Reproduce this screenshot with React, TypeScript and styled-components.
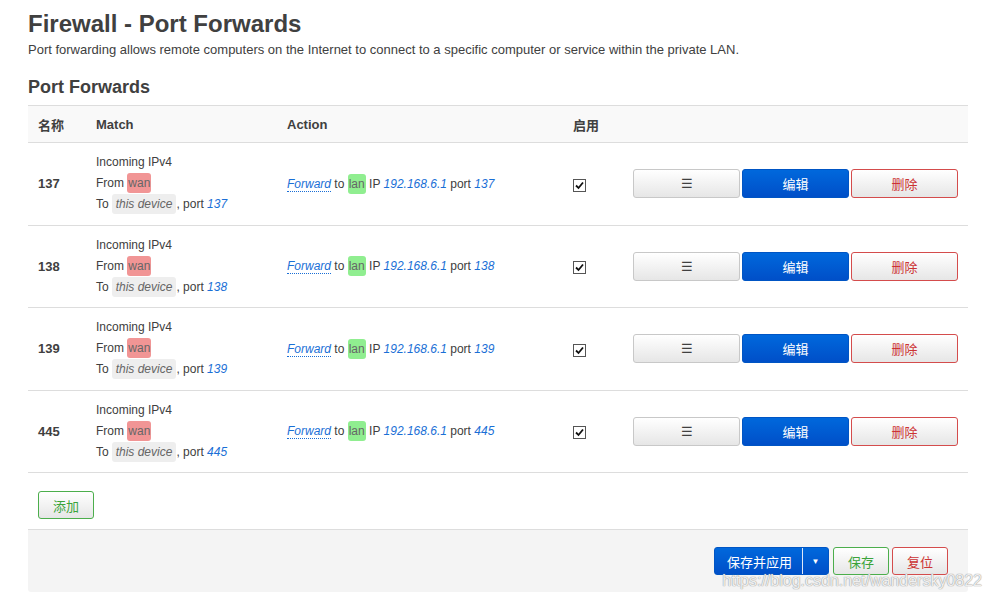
import React from 'react'
import styled, { createGlobalStyle } from 'styled-components'

const FONT = `"Liberation Sans", Arial, "Noto Sans CJK SC", sans-serif`

const GlobalStyle = createGlobalStyle`
  body {
    margin: 0;
    background: #fff;
    font-family: ${FONT};
    color: #404040;
  }
`

const Page = styled.div`
  position: relative;
  width: 990px;
  height: 599px;
  padding: 0 22px 0 28px;
  box-sizing: border-box;
  overflow: hidden;
`

const Title = styled.h2`
  margin: 0;
  padding-top: 10px;
  font-size: 24px;
  line-height: 28px;
  font-weight: bold;
  color: #404040;
`

const Description = styled.div`
  margin-top: 3px;
  font-size: 13px;
  line-height: 18px;
  color: #404040;
`

const SectionTitle = styled.h3`
  margin: 17px 0 0;
  font-size: 18px;
  line-height: 22px;
  font-weight: bold;
  color: #404040;
`

const Table = styled.table`
  margin-top: 7px;
  width: 940px;
  border-collapse: collapse;
  table-layout: fixed;
  font-size: 12px;
`

const HeadRow = styled.tr`
  background: #f9f9f9;
  border-top: 1px solid #ddd;
  border-bottom: 1px solid #ddd;
  height: 37px;
`

const Th = styled.th<{ $w: number }>`
  box-sizing: border-box;
  width: ${p => p.$w}px;
  padding: 0 10px;
  text-align: left;
  font-size: 13px;
  font-weight: bold;
  color: #404040;
  vertical-align: middle;
`

const Row = styled.tr`
  border-bottom: 1px solid #ddd;
  height: 82.5px;
`

const Td = styled.td`
  padding: 0 10px;
  vertical-align: middle;
  color: #404040;
`

const NameCell = styled(Td)`
  font-size: 13px;
  font-weight: bold;
`

const Line = styled.div`
  line-height: 21px;
`

const Badge = styled.span<{ $bg: string; $italic?: boolean }>`
  display: inline-block;
  padding: 0 1px;
  line-height: 20px;
  border-radius: 3px;
  background: ${p => p.$bg};
  color: #666;
  font-style: ${p => (p.$italic ? 'italic' : 'normal')};
`

const DeviceBadge = styled(Badge)`
  padding: 0 4px;
  margin-left: 3px;
`

const Val = styled.i`
  color: #1a6fd6;
`

const FwdLink = styled.span`
  font-style: italic;
  color: #1a6fd6;
  border-bottom: 1px dotted #1a6fd6;
`

const CheckBox = styled.span`
  display: inline-flex;
  align-items: center;
  justify-content: center;
  box-sizing: border-box;
  width: 13px;
  height: 13px;
  margin-top: 4px;
  border: 1px solid #555;
  background: #fff;
`

const Actions = styled.div`
  display: flex;
  gap: 2px;
`

const Btn = styled.button<{ $kind: 'neutral' | 'primary' | 'negative' | 'positive' }>`
  box-sizing: border-box;
  height: 28px;
  border-radius: 3px;
  font-family: ${FONT};
  font-size: 13px;
  cursor: pointer;
  padding: 0 14px;
  border: 1px solid
    ${p =>
      p.$kind === 'primary'
        ? '#0055c4'
        : p.$kind === 'negative'
        ? '#d44c4c'
        : p.$kind === 'positive'
        ? '#4cae4c'
        : '#c8c8c8'};
  background: ${p =>
    p.$kind === 'primary'
      ? 'linear-gradient(#0068dc, #004fc8)'
      : 'linear-gradient(#ffffff, #e6e6e6)'};
  color: ${p =>
    p.$kind === 'primary'
      ? '#fff'
      : p.$kind === 'negative'
      ? '#cc3333'
      : p.$kind === 'positive'
      ? '#3ba43b'
      : '#404040'};
`

const RowBtn = styled(Btn)`
  width: 107px;
  height: 29px;
`

const AddWrap = styled.div`
  padding: 18px 10px 10px;
`

const AddBtn = styled(Btn)`
  width: 56px;
  padding: 0;
`

const Footer = styled.div`
  width: 940px;
  height: 63px;
  box-sizing: border-box;
  background: #f4f4f4;
  border-top: 1px solid #ddd;
  border-radius: 0 0 3px 3px;
  display: flex;
  justify-content: flex-end;
  align-items: flex-start;
  gap: 3px;
  padding: 17px 20px 0 0;
`

const Split = styled.div`
  display: flex;
  height: 28px;
  margin-right: 1px;
  border-radius: 3px;
  overflow: hidden;
  border: 1px solid #0055c4;
  box-sizing: border-box;
  background: linear-gradient(#0068dc, #004fc8);
  color: #fff;
  font-size: 13px;
`

const SplitMain = styled.div`
  display: flex;
  align-items: center;
  padding: 0 10px 0 12px;
  border-right: 1px solid #e0e8f8;
`

const SplitArrow = styled.div`
  display: flex;
  align-items: center;
  justify-content: center;
  width: 25px;
  font-size: 8px;
`

const FooterBtn = styled(Btn)`
  width: 56px;
  padding: 0;
`

const Watermark = styled.div`
  position: absolute;
  right: 8px;
  bottom: 9px;
  font-family: ${FONT};
  font-size: 16px;
  color: rgba(255, 255, 255, 0.85);
  text-shadow: 0 0 1px #999, 0 0 1px #999;
`

const rules = ['137', '138', '139', '445']

const App: React.FC = () => {
  return (
    <Page>
      <GlobalStyle />
      <Title>Firewall - Port Forwards</Title>
      <Description>
        Port forwarding allows remote computers on the Internet to connect to a specific computer or
        service within the private LAN.
      </Description>
      <SectionTitle>Port Forwards</SectionTitle>
      <Table>
        <thead>
          <HeadRow>
            <Th $w={58}>名称</Th>
            <Th $w={191}>Match</Th>
            <Th $w={286}>Action</Th>
            <Th $w={60}>启用</Th>
            <Th $w={345}></Th>
          </HeadRow>
        </thead>
        <tbody>
          {rules.map(port => (
            <Row key={port}>
              <NameCell>{port}</NameCell>
              <Td>
                <Line>Incoming IPv4</Line>
                <Line>
                  From <Badge $bg="#f19595">wan</Badge>
                </Line>
                <Line>
                  To<DeviceBadge $bg="#eeeeee" $italic>this device</DeviceBadge>, port <Val>{port}</Val>
                </Line>
              </Td>
              <Td>
                <FwdLink>Forward</FwdLink> to <Badge $bg="#90ee90">lan</Badge> IP{' '}
                <Val>192.168.6.1</Val> port <Val>{port}</Val>
              </Td>
              <Td>
                <CheckBox>
                  <svg width="9" height="9" viewBox="0 0 9 9">
                    <path d="M1 4.5 L3.5 7 L8 1.5" fill="none" stroke="#111" strokeWidth="1.8" />
                  </svg>
                </CheckBox>
              </Td>
              <Td>
                <Actions>
                  <RowBtn $kind="neutral">☰</RowBtn>
                  <RowBtn $kind="primary">编辑</RowBtn>
                  <RowBtn $kind="negative">删除</RowBtn>
                </Actions>
              </Td>
            </Row>
          ))}
        </tbody>
      </Table>
      <AddWrap>
        <AddBtn $kind="positive">添加</AddBtn>
      </AddWrap>
      <Footer>
        <Split>
          <SplitMain>保存并应用</SplitMain>
          <SplitArrow>▼</SplitArrow>
        </Split>
        <FooterBtn $kind="positive">保存</FooterBtn>
        <FooterBtn $kind="negative">复位</FooterBtn>
      </Footer>
      <Watermark>https://blog.csdn.net/wandersky0822</Watermark>
    </Page>
  )
}

export default App
